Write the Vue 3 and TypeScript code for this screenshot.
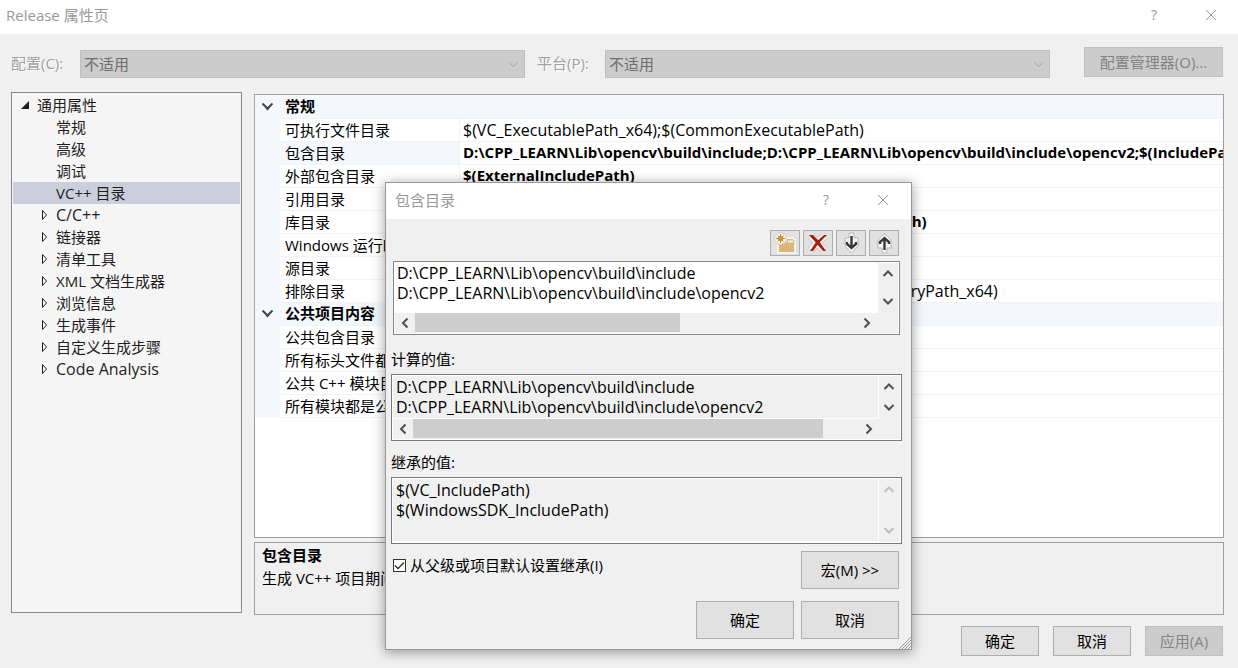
<script setup lang="ts">
import { ref } from 'vue'

interface TreeItem {
  label: string
  kind: 'root' | 'leaf' | 'branch'
}

interface Property {
  name: string
  value: string
  bold?: boolean
}

interface PropertyGroup {
  title: string
  rows: Property[]
}

const tree: TreeItem[] = [
  { label: '通用属性', kind: 'root' },
  { label: '常规', kind: 'leaf' },
  { label: '高级', kind: 'leaf' },
  { label: '调试', kind: 'leaf' },
  { label: 'VC++ 目录', kind: 'leaf' },
  { label: 'C/C++', kind: 'branch' },
  { label: '链接器', kind: 'branch' },
  { label: '清单工具', kind: 'branch' },
  { label: 'XML 文档生成器', kind: 'branch' },
  { label: '浏览信息', kind: 'branch' },
  { label: '生成事件', kind: 'branch' },
  { label: '自定义生成步骤', kind: 'branch' },
  { label: 'Code Analysis', kind: 'branch' },
]
const selectedNode = ref('VC++ 目录')
const selectedProperty = ref('包含目录')

const isLatin = (text: string): boolean => /^[\x20-\x7e]+$/.test(text)

const groups: PropertyGroup[] = [
  {
    title: '常规',
    rows: [
      { name: '可执行文件目录', value: '$(VC_ExecutablePath_x64);$(CommonExecutablePath)' },
      {
        name: '包含目录',
        value: 'D:\\CPP_LEARN\\Lib\\opencv\\build\\include;D:\\CPP_LEARN\\Lib\\opencv\\build\\include\\opencv2;$(IncludePath)',
        bold: true,
      },
      { name: '外部包含目录', value: '$(ExternalIncludePath)', bold: true },
      { name: '引用目录', value: '$(VC_ReferencesPath_x64);' },
      { name: '库目录', value: 'D:\\CPP_LEARN\\Lib\\opencv\\build\\x64\\vc15\\lib64;$(LibraryPath)', bold: true },
      { name: 'Windows 运行时库目录', value: '$(WindowsSDK_MetadataPath);' },
      { name: '源目录', value: '$(VC_SourcePath);' },
      { name: '排除目录', value: '$(CommonExcludeDir);$(VC_ExecutablePath_x64);$(VC_LibraryPath_x64)' },
    ],
  },
  {
    title: '公共项目内容',
    rows: [
      { name: '公共包含目录', value: '' },
      { name: '所有标头文件都是公共的', value: '否' },
      { name: '公共 C++ 模块目录', value: '' },
      { name: '所有模块都是公共的', value: '否' },
    ],
  },
]

const paths = ref('D:\\CPP_LEARN\\Lib\\opencv\\build\\include\nD:\\CPP_LEARN\\Lib\\opencv\\build\\include\\opencv2')
const inherited = '$(VC_IncludePath)\n$(WindowsSDK_IncludePath)'
const inherit = ref(true)
</script>

<template>
  <div class="window">
    <header class="titlebar">
      <h1>Release 属性页</h1>
      <button class="caption" aria-label="帮助">?</button>
      <button class="caption" aria-label="关闭">
        <svg width="12" height="12" viewBox="0 0 12 12"><path d="M1 1 11 11M11 1 1 11" /></svg>
      </button>
    </header>

    <div class="config">
      <label for="configuration">配置(C):</label>
      <div class="combo">
        <select id="configuration" disabled><option>不适用</option></select>
        <svg width="9" height="6" viewBox="0 0 9 6"><path d="M.5 .5 4.500 4.500 8.500 .5" /></svg>
      </div>
      <label for="platform" class="platform">平台(P):</label>
      <div class="combo">
        <select id="platform" disabled><option>不适用</option></select>
        <svg width="9" height="6" viewBox="0 0 9 6"><path d="M.5 .5 4.500 4.500 8.500 .5" /></svg>
      </div>
      <button class="btn manager" disabled>配置管理器(O)...</button>
    </div>

    <main class="content">
      <ul class="tree" role="tree" aria-label="属性">
        <li
          v-for="item in tree"
          :key="item.label"
          role="treeitem"
          :class="[item.kind, { selected: item.label === selectedNode }]"
          @click="selectedNode = item.label"
        >
          <svg v-if="item.kind === 'root'" width="8" height="8" viewBox="0 0 8 8"><path d="M8 0V8H0Z" fill="#1e1e1e" /></svg>
          <svg v-if="item.kind === 'branch'" width="6" height="12" viewBox="0 0 6 12">
            <path d="M1.500 1.500V10.500L5.500 6Z" fill="#fff" stroke="#1e1e1e" />
          </svg>
          <span :class="{ latin: isLatin(item.label) }">{{ item.label }}</span>
        </li>
      </ul>

      <div class="right">
        <div class="grid">
          <table>
            <colgroup><col class="c-gutter" /><col class="c-name" /><col /></colgroup>
            <tbody v-for="group in groups" :key="group.title">
              <tr class="group">
                <td class="gutter">
                  <svg width="12" height="8" viewBox="0 0 12 8"><path d="M.5 .5 5.500 5.500 10.500 .5M4 4.500 5.500 6 7 4.500" /></svg>
                </td>
                <th colspan="2" scope="rowgroup">{{ group.title }}</th>
              </tr>
              <tr
                v-for="row in group.rows"
                :key="row.name"
                :class="{ current: row.name === selectedProperty }"
                @click="selectedProperty = row.name"
              >
                <td class="gutter"></td>
                <td class="name">{{ row.name }}</td>
                <td class="value" :class="row.bold ? 'bold' : { latin: isLatin(row.value) }">{{ row.value }}</td>
              </tr>
            </tbody>
          </table>
        </div>
        <section class="description">
          <h2>包含目录</h2>
          <p>生成 VC++ 项目期间，搜索包含文件时使用的路径。</p>
        </section>
      </div>
    </main>

    <footer class="footer">
      <button class="btn">确定</button>
      <button class="btn">取消</button>
      <button class="btn" disabled>应用(A)</button>
    </footer>

    <div class="dialog" role="dialog" aria-labelledby="dialog-title">
      <header class="titlebar">
        <h2 id="dialog-title">包含目录</h2>
        <button class="caption" aria-label="帮助">?</button>
        <button class="caption" aria-label="关闭">
          <svg width="12" height="12" viewBox="0 0 12 12"><path d="M1 1 11 11M11 1 1 11" /></svg>
        </button>
      </header>

      <div class="toolbar">
        <button class="tool" aria-label="新行">
          <svg width="24" height="22" viewBox="0 0 24 22">
            <path d="M10 7h3V5h8v2h2v15H4v-9z" fill="#f5f3ef" />
            <path d="M6 12h4l3-2h1V8h1v3h6v9H6z" fill="#dcb679" />
            <path d="M14 7h6v1h1.500v3.500H14z" fill="#dcb679" />
            <path d="M15 8.500h5.500v2H15z" fill="#f8f4ea" />
            <circle cx="7.500" cy="6.500" r="6" fill="#f5f3ef" stroke="#cfcdc8" />
            <path d="M7.500 2v9M3 6.500h9M4.500 3.500l6 6M10.500 3.500l-6 6" fill="none" stroke="#c98629" />
            <circle cx="7.500" cy="6.500" r="2.500" fill="#c98629" />
            <path d="M7 6h1v1H7z" fill="#f5d9a4" />
          </svg>
        </button>
        <button class="tool" aria-label="删除">
          <svg width="24" height="22" viewBox="0 0 24 22">
            <path d="M5 4 18 18M19 4Q12 9 5 18" fill="none" stroke="#c8c8c8" stroke-width="8" />
            <path d="M5 4 18 18M19 4Q12 9 5 18" fill="none" stroke="#f8f8f8" stroke-width="6" />
            <path d="M3 3h4l6 6 7 10h-3l-6-7z" fill="#a81e0c" />
            <path d="M18 3h3l-8 8-6 8H4l6-9z" fill="#a81e0c" />
          </svg>
        </button>
        <button class="tool" aria-label="下移">
          <svg width="24" height="22" viewBox="0 0 24 22">
            <path d="M10 1h5v5h4v8l-6.500 7L6 14V6h4z" fill="#f6f6f6" stroke="#b8b8b8" />
            <path d="M12.500 4v12M8 10v2l4.500 4 4.500-4v-2" fill="none" stroke="#383838" stroke-width="2.400" />
          </svg>
        </button>
        <button class="tool" aria-label="上移">
          <svg width="24" height="22" viewBox="0 0 24 22">
            <path d="M10 21h5v-5h4V8l-6.500-7L6 8v8h4z" fill="#f6f6f6" stroke="#b8b8b8" />
            <path d="M12.500 18V6M8 12v-2l4.500-4 4.500 4v2" fill="none" stroke="#383838" stroke-width="2.400" />
          </svg>
        </button>
      </div>

      <div class="listbox editable">
        <textarea v-model="paths" aria-label="包含目录" rows="2" wrap="off" spellcheck="false"></textarea>
        <div class="vbar">
          <button aria-label="向上滚动"><svg width="12" height="8" viewBox="0 0 12 8"><path d="M1.500 6 6 1.500 10.500 6" /></svg></button>
          <button aria-label="向下滚动"><svg width="12" height="8" viewBox="0 0 12 8"><path d="M1.500 2 6 6.500 10.500 2" /></svg></button>
        </div>
        <div class="hbar">
          <button aria-label="向左滚动"><svg width="8" height="12" viewBox="0 0 8 12"><path d="M6.500 1.500 2 6 6.500 10.500" /></svg></button>
          <div class="track"><div class="thumb short"></div></div>
          <button aria-label="向右滚动"><svg width="8" height="12" viewBox="0 0 8 12"><path d="M1.500 1.500 6 6 1.500 10.500" /></svg></button>
        </div>
      </div>

      <label class="caption-label" for="evaluated">计算的值:</label>
      <div class="listbox">
        <textarea id="evaluated" :value="paths" rows="2" wrap="off" readonly spellcheck="false"></textarea>
        <div class="vbar">
          <button aria-label="向上滚动"><svg width="12" height="8" viewBox="0 0 12 8"><path d="M1.500 6 6 1.500 10.500 6" /></svg></button>
          <button aria-label="向下滚动"><svg width="12" height="8" viewBox="0 0 12 8"><path d="M1.500 2 6 6.500 10.500 2" /></svg></button>
        </div>
        <div class="hbar">
          <button aria-label="向左滚动"><svg width="8" height="12" viewBox="0 0 8 12"><path d="M6.500 1.500 2 6 6.500 10.500" /></svg></button>
          <div class="track"><div class="thumb long"></div></div>
          <button aria-label="向右滚动"><svg width="8" height="12" viewBox="0 0 8 12"><path d="M1.500 1.500 6 6 1.500 10.500" /></svg></button>
        </div>
      </div>

      <label class="caption-label" for="inherited">继承的值:</label>
      <div class="listbox single">
        <textarea id="inherited" :value="inherited" rows="3" wrap="off" readonly spellcheck="false"></textarea>
        <div class="vbar idle">
          <button disabled aria-label="向上滚动"><svg width="12" height="8" viewBox="0 0 12 8"><path d="M1.500 6 6 1.500 10.500 6" /></svg></button>
          <button disabled aria-label="向下滚动"><svg width="12" height="8" viewBox="0 0 12 8"><path d="M1.500 2 6 6.500 10.500 2" /></svg></button>
        </div>
      </div>

      <div class="options">
        <label class="check">
          <input v-model="inherit" type="checkbox" />
          <span class="box">
            <svg v-if="inherit" width="11" height="11" viewBox="0 0 11 11"><path d="M1 5.500 4 8.500 10 2.500" /></svg>
          </span>
          从父级或项目默认设置继承(I)
        </label>
        <button class="btn large">宏(M) &gt;&gt;</button>
      </div>
      <div class="actions">
        <button class="btn large">确定</button>
        <button class="btn large">取消</button>
      </div>
      <svg class="grip" width="12" height="12" viewBox="0 0 12 12">
        <path d="M0 12 12 0M3 12 12 3M6 12 12 6M9 12 12 9" />
      </svg>
    </div>
  </div>
</template>

<style>
body {
  margin: 0;
}
</style>

<style scoped>
.window {
  position: relative;
  display: flex;
  flex-direction: column;
  min-height: 100vh;
  overflow: hidden;
  background: #f0f0f0;
  color: #000;
  font: 15px/20px "Open Sans", "Noto Sans CJK SC", sans-serif;
}
.window * {
  box-sizing: border-box;
}
button,
select,
textarea {
  font: inherit;
  color: inherit;
}
h1,
h2,
p,
ul {
  margin: 0;
  padding: 0;
  font-size: 15px;
  font-weight: 400;
}
svg {
  display: block;
}
.latin,
textarea {
  font-size: 16px;
}
.titlebar {
  display: flex;
  align-items: center;
  height: 34px;
  padding: 0 21px 4px 6px;
  background: #fff;
  color: #999;
}
.titlebar h1,
.titlebar h2 {
  flex: 1;
}
.caption {
  display: flex;
  justify-content: center;
  align-items: center;
  width: 12px;
  margin-left: 45px;
  padding: 0;
  border: 0;
  background: none;
  font-size: 14px;
}
.caption path {
  stroke: #999;
  fill: none;
}
.config {
  display: flex;
  align-items: flex-start;
  padding: 13px 15px 14px 11px;
}
.config label {
  width: 69px;
  padding-top: 6px;
  color: #a0a0a0;
  text-shadow: 1px 1px #fff;
}
.config .platform {
  width: 68px;
  margin-left: 12px;
}
.combo {
  position: relative;
  flex: 1;
  margin-top: 3px;
}
.combo select {
  display: block;
  width: 100%;
  height: 28px;
  padding: 0 3px;
  border: 1px solid #bfbfbf;
  border-radius: 0;
  appearance: none;
  background: #ccc;
  color: #6d6d6d;
  opacity: 1;
}
.combo svg {
  position: absolute;
  right: 7px;
  top: 12px;
  stroke: #a0a0a0;
  fill: none;
}
.btn {
  width: 78px;
  height: 30px;
  padding: 0;
  border: 1px solid #adadad;
  background: #e1e1e1;
}
.btn:disabled {
  border-color: #bfbfbf;
  background: #ccc;
  color: #838383;
}
.btn.large {
  width: 98px;
  height: 38px;
}
.btn.manager {
  width: 139px;
  margin-left: 34px;
}
.content {
  display: flex;
  flex: 1;
  gap: 12px;
  padding: 0 14px 0 11px;
}
.tree {
  width: 231px;
  margin-bottom: 2px;
  padding: 1px;
  border: 1px solid #828790;
  background: #f5f5f5;
  color: #1e1e1e;
  list-style: none;
}
.tree li {
  display: flex;
  align-items: center;
  height: 22px;
  padding-left: 43px;
}
.tree li.root {
  gap: 8px;
  padding-left: 8px;
}
.tree li.branch {
  gap: 9px;
  padding-left: 28px;
}
.tree li.selected {
  background: #cccedb;
}
.right {
  display: flex;
  flex: 1;
  flex-direction: column;
  gap: 4px;
  min-width: 0;
  padding-top: 2px;
}
.grid {
  flex: 1;
  overflow: hidden;
  border: 1px solid #a0a0a0;
  background: #fff;
}
table {
  width: 100%;
  border-spacing: 0;
  table-layout: fixed;
}
.c-gutter {
  width: 25px;
}
.c-name {
  width: 180px;
}
td,
th {
  height: 23px;
  padding: 0;
  border-bottom: 1px solid #f0f3f9;
  overflow: hidden;
  line-height: 20px;
  white-space: nowrap;
  text-align: left;
}
tbody:first-of-type .group th {
  height: 24px;
}
th {
  padding: 0 0 2px 5px;
  background: #f4f7fc;
  font-weight: 700;
}
.gutter {
  padding-left: 7px;
  border-color: #f4f7fc;
  background: #f4f7fc;
}
.gutter path {
  fill: none;
  stroke: #444;
  stroke-width: 2;
}
.name {
  padding-left: 5px;
  border-right: 1px solid #f0f3f9;
}
.value {
  padding-left: 3px;
}
.current .name {
  background: #f4f7fc;
}
.value.bold {
  padding-bottom: 2px;
  font-weight: 700;
}
.description {
  height: 73px;
  padding: 2px 7px;
  border: 1px solid #a0a0a0;
}
.description h2 {
  margin-bottom: 3px;
  font-weight: 700;
}
.footer {
  display: flex;
  justify-content: flex-end;
  gap: 14px;
  padding: 11px 15px 12px;
}
.dialog {
  position: absolute;
  top: 182px;
  left: 385px;
  width: 527px;
  padding-bottom: 10px;
  border: 1px solid #999;
  background: #f0f0f0;
  box-shadow: 0 2px 12px rgba(0, 0, 0, 0.4);
}
.dialog .titlebar {
  height: 36px;
  padding: 0 22px 2px 9px;
}
.toolbar {
  display: flex;
  justify-content: flex-end;
  gap: 3px;
  padding: 11px 12px 5px;
}
.tool {
  display: grid;
  place-items: center;
  width: 30px;
  height: 26px;
  padding: 0;
  border: 1px solid #adadad;
  background: #e1e1e1;
}
.listbox {
  display: grid;
  grid-template-columns: 1fr 21px;
  grid-template-rows: 43px 20px;
  margin: 0 9px 0 5px;
  padding: 1px;
  border: 1px solid #7a7a7a;
  background: #f0f0f0;
  box-shadow: inset 0 0 0 1px #fff;
}
.listbox.single {
  grid-template-rows: 63px;
}
.listbox.editable {
  grid-template-columns: 1fr 20px;
  grid-template-rows: 50px 20px;
  margin: 0 11px 0 7px;
  border-color: #828790;
}
textarea {
  display: block;
  width: 100%;
  height: 100%;
  padding: 1px 3px;
  border: 0;
  border-right: 1px solid #fff;
  border-bottom: 1px solid #fff;
  background: #f0f0f0;
  outline: 0;
  overflow: hidden;
  resize: none;
}
.editable textarea {
  padding: 0 2px;
  background: #fff;
}
.vbar,
.hbar {
  display: flex;
  justify-content: space-between;
}
.vbar {
  flex-direction: column;
  padding: 1px 0 2px;
}
.hbar {
  grid-column: 1 / -1;
  padding-right: 21px;
}
.vbar button,
.hbar button {
  display: grid;
  place-items: center;
  width: 20px;
  height: 20px;
  padding: 0;
  border: 0;
  background: none;
  fill: none;
  stroke: #505050;
  stroke-width: 2;
}
.vbar.idle button {
  stroke: #bfbfbf;
}
.track {
  flex: 1;
}
.thumb {
  height: 19px;
  background: #cdcdcd;
}
.thumb.short {
  width: 60%;
}
.thumb.long {
  width: 92%;
}
.caption-label {
  display: block;
  padding: 14px 5px 5px;
}
.caption-label[for="inherited"] {
  padding-top: 11px;
}
.options {
  display: flex;
  justify-content: space-between;
  align-items: flex-start;
  padding: 7px 12px 0 7px;
}
.check {
  display: flex;
  align-items: center;
  padding-top: 4px;
}
.check input {
  position: absolute;
  opacity: 0;
}
.box {
  width: 13px;
  height: 13px;
  margin-right: 4px;
  border: 1px solid #333;
  background: #fff;
}
.box path {
  fill: none;
  stroke: #333;
  stroke-width: 1.400;
}
.actions {
  display: flex;
  justify-content: flex-end;
  gap: 7px;
  padding: 12px 12px 0;
}
.grip {
  position: absolute;
  right: 0;
  bottom: 0;
  stroke: #999;
}
</style>
